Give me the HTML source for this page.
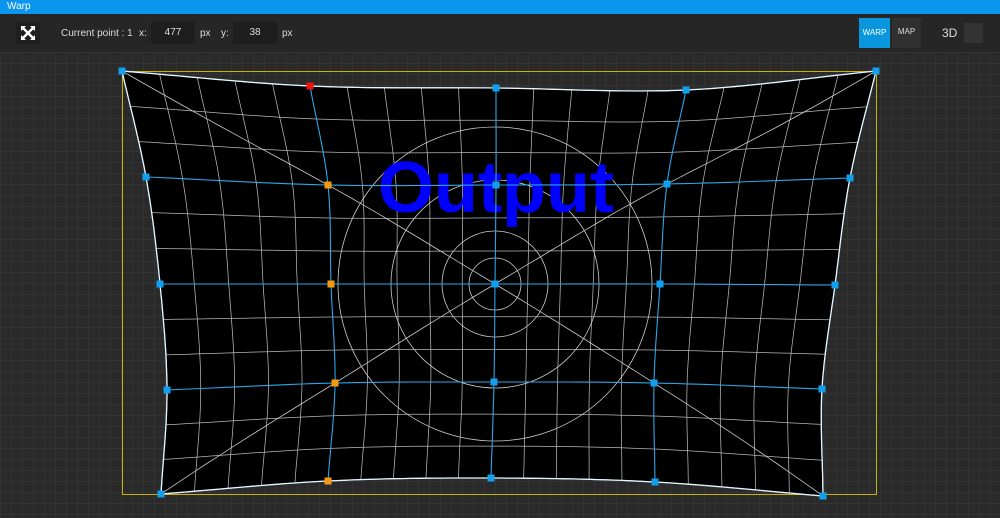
<!DOCTYPE html>
<html><head><meta charset="utf-8"><style>
html,body{margin:0;padding:0;width:1000px;height:518px;overflow:hidden;background:#2a2a2a;font-family:"Liberation Sans",sans-serif}
.title{position:absolute;left:0;top:0;width:1000px;height:14px;background:#0a96ef;color:#fff;font-size:10px;line-height:14px;padding-left:7px;box-sizing:border-box}
.tb{position:absolute;left:0;top:14px;width:1000px;height:38px;background:#262626}
.t{position:absolute;color:#ddd;font-size:10px;top:28px}
.inp{position:absolute;top:22px;height:22px;width:44px;background:#1e1e1e;color:#ddd;font-size:10px;text-align:center;line-height:22px}
.bg{position:absolute;left:0;top:52px;width:1000px;height:466px;background-color:#2a2a2a;background-image:linear-gradient(#343434 1px,transparent 1px),linear-gradient(90deg,#343434 1px,transparent 1px);background-size:11px 11px}
</style></head><body>
<div class="bg"></div>
<div class="title">Warp</div>
<div class="tb"></div>
<div style="position:absolute;left:16px;top:22px;width:24px;height:22px;background:#1f1f1f"></div>
<svg style="position:absolute;left:16px;top:22px" width="24" height="22" viewBox="0 0 24 22">
<g stroke="#fff" stroke-width="2.4" fill="none"><path d="M6 5 L18 17 M18 5 L6 17"/></g>
<g fill="#fff"><path d="M5 4h5l-5 5z M19 4h-5l5 5z M5 18h5l-5-5z M19 18h-5l5-5z"/></g>
</svg>
<div class="t" style="left:61px">Current point : 1</div>
<div class="t" style="left:139px">x:</div>
<div class="inp" style="left:151px">477</div>
<div class="t" style="left:200px">px</div>
<div class="t" style="left:221px">y:</div>
<div class="inp" style="left:233px">38</div>
<div class="t" style="left:282px">px</div>
<div style="position:absolute;left:859px;top:18px;width:31px;height:30px;background:#0a96dc;color:#fff;font-size:8px;line-height:30px;text-align:center">WARP</div>
<div style="position:absolute;left:892px;top:18px;width:29px;height:30px;background:#303030;color:#ddd;font-size:8px;line-height:28px;text-align:center">MAP</div>
<div style="position:absolute;left:942px;top:26px;color:#ddd;font-size:12px">3D</div>
<div style="position:absolute;left:964px;top:23px;width:19px;height:20px;background:#333"></div>
<svg id="s" style="position:absolute;left:0;top:0" width="1000" height="518"></svg>
<script>
var P=[[[122,71],[310,86],[496,88],[686,90],[876,71]],
[[146,177],[328,185],[496,185],[667,184],[850,178]],
[[160,284],[331,284],[495,284],[660,284],[835,285]],
[[167,390],[335,383],[494,382],[654,383],[822,389]],
[[161,494],[328,481],[491,478],[655,482],[823,496]]];
function cr(p0,p1,p2,p3,t){var t2=t*t,t3=t2*t;return 0.5*((2*p1)+(-p0+p2)*t+(2*p0-5*p1+4*p2-p3)*t2+(-p0+3*p1-3*p2+p3)*t3);}
function sp(a,s){var n=a.length-1;s=Math.max(0,Math.min(n-1e-9,s*n));var i=Math.floor(s),t=s-i;
var g=function(k){return a[Math.max(0,Math.min(n,k))];};
var p0=g(i-1),p1=g(i),p2=g(i+1),p3=g(i+2);
if(i==0)p0=[2*p1[0]-p2[0],2*p1[1]-p2[1]];if(i+2>n)p3=[2*p2[0]-p1[0],2*p2[1]-p1[1]];
return [cr(p0[0],p1[0],p2[0],p3[0],t),cr(p0[1],p1[1],p2[1],p3[1],t)];}
function W(u,v){var col=P.map(function(r){return sp(r,u);});return sp(col,v);}
var h='<rect x="122.5" y="71.5" width="754" height="423" fill="none" stroke="#c8b400" stroke-width="1"/>';
function poly(f,N){var d='';for(var k=0;k<=N;k++){var q=f(k/N);d+=(k?'L':'M')+q[0].toFixed(1)+' '+q[1].toFixed(1);}return d;}
var out=poly(function(t){return W(t,0)},80)+poly(function(t){return W(1,t)},80).replace('M','L')+poly(function(t){return W(1-t,1)},80).replace('M','L')+poly(function(t){return W(0,1-t)},80).replace('M','L')+'Z';
h+='<path d="'+out+'" fill="#000"/>';
var g='';
for(var i=0;i<=20;i++){if(i%5)g+='<path d="'+poly(function(t){return W(i/20,t)},60)+'"/>';}
for(var j=0;j<=12;j++){if(j%3)g+='<path d="'+poly(function(t){return W(t,j/12)},60)+'"/>';}
h+='<g fill="none" stroke="#b8b8b8" stroke-width="0.75">'+g+'</g>';
var c='';[26,53,104,157].forEach(function(r){c+='<circle cx="495" cy="284" r="'+r+'"/>';});
c+='<path d="'+poly(function(t){return W(t,t)},60)+'"/><path d="'+poly(function(t){return W(1-t,t)},60)+'"/>';
h+='<g fill="none" stroke="#cccccc" stroke-width="0.8">'+c+'</g>';
h+='<text x="496" y="212" text-anchor="middle" font-family="Liberation Sans,sans-serif" font-weight="bold" font-size="72" fill="#0000ff">Output</text>';
var b='';
for(var i=0;i<=4;i++){b+='<path d="'+poly(function(t){return W(i/4,t)},60)+'"/>';b+='<path d="'+poly(function(t){return W(t,i/4)},60)+'"/>';}
h+='<g fill="none" stroke="#2aa8e8" stroke-width="1.1">'+b+'</g>';
h+='<path d="'+out+'" fill="none" stroke="#e8f6ff" stroke-width="1.3"/>';
for(var r=0;r<5;r++)for(var k=0;k<5;k++){var p=P[r][k];var col='#12a0ee';
if(r==0&&k==1)col='#ee1111';else if(k==1&&r>0)col='#f59a10';
h+='<rect x="'+(p[0]-3.5)+'" y="'+(p[1]-3.5)+'" width="7" height="7" fill="'+col+'"/>';}
document.getElementById('s').innerHTML=h;
</script>
</body></html>
